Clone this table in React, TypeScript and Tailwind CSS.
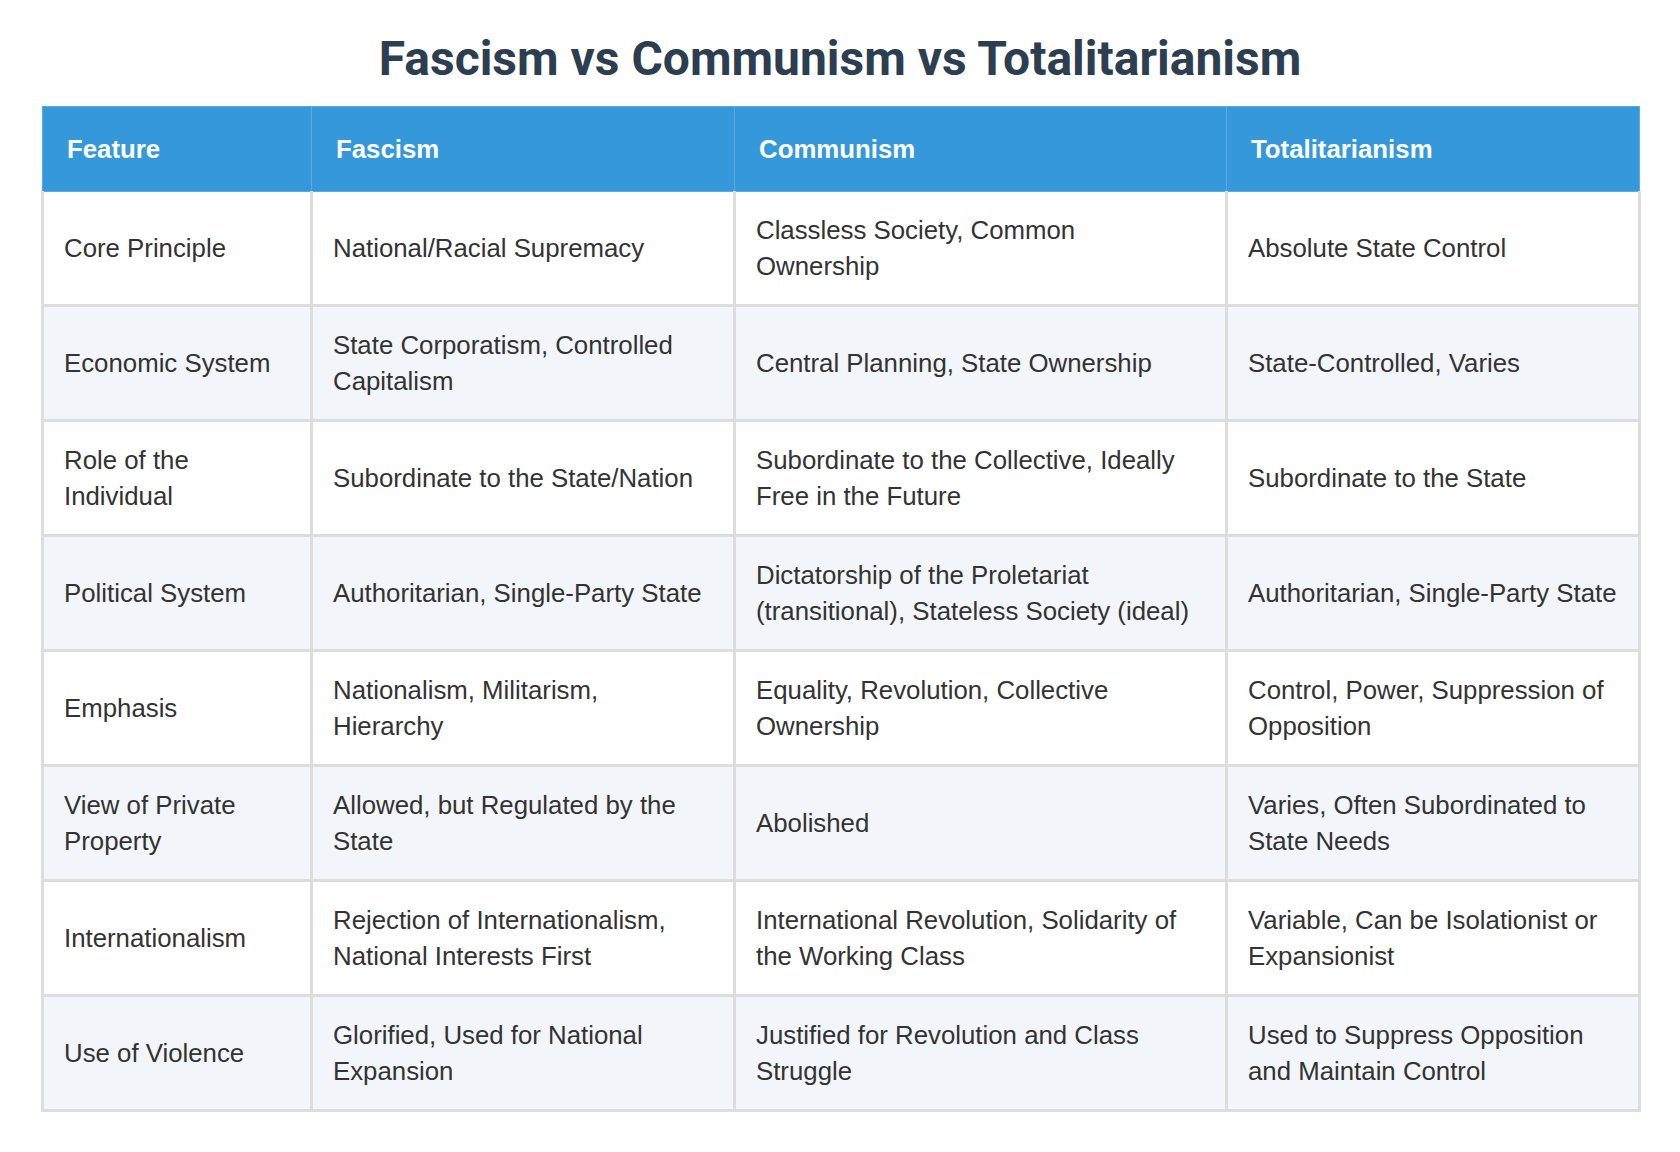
import React from 'react';

const rows: string[][] = [
  ['Core Principle', 'National/Racial Supremacy', 'Classless Society, Common Ownership', 'Absolute State Control'],
  ['Economic System', 'State Corporatism, Controlled Capitalism', 'Central Planning, State Ownership', 'State-Controlled, Varies'],
  ['Role of the Individual', 'Subordinate to the State/Nation', 'Subordinate to the Collective, Ideally Free in the Future', 'Subordinate to the State'],
  ['Political System', 'Authoritarian, Single-Party State', 'Dictatorship of the Proletariat (transitional), Stateless Society (ideal)', 'Authoritarian, Single-Party State'],
  ['Emphasis', 'Nationalism, Militarism, Hierarchy', 'Equality, Revolution, Collective Ownership', 'Control, Power, Suppression of Opposition'],
  ['View of Private Property', 'Allowed, but Regulated by the State', 'Abolished', 'Varies, Often Subordinated to State Needs'],
  ['Internationalism', 'Rejection of Internationalism, National Interests First', 'International Revolution, Solidarity of the Working Class', 'Variable, Can be Isolationist or Expansionist'],
  ['Use of Violence', 'Glorified, Used for National Expansion', 'Justified for Revolution and Class Struggle', 'Used to Suppress Opposition and Maintain Control'],
];

const headers = ['Feature', 'Fascism', 'Communism', 'Totalitarianism'];

const App: React.FC = () => {
  return (
    <div className="min-h-screen bg-white pt-[31px] font-['Liberation_Sans',Arial,sans-serif]">
      <h1 className="text-center text-[48px] leading-[56px] font-bold text-[#2c3e50] font-['Roboto',sans-serif] mb-[19px]">
        Fascism vs Communism vs Totalitarianism
      </h1>

      <table className="ml-[41px] w-[1597px] table-fixed border-collapse text-[25.8px] leading-[36px] text-[#333]">
        <colgroup>
          <col className="w-[269px]" />
          <col className="w-[423px]" />
          <col className="w-[492px]" />
          <col className="w-[413px]" />
        </colgroup>
        <thead>
          <tr className="bg-[#3498db]">
            {headers.map((h, i) => (
              <th
                key={i}
                className="border border-[#5aaae2] py-[24px] px-[24px] text-left font-bold text-white"
              >
                {h}
              </th>
            ))}
          </tr>
        </thead>
        <tbody>
          {rows.map((row, r) => (
            <tr key={r} className={r % 2 === 1 ? 'bg-[#f2f5f9]' : 'bg-white'}>
              {row.map((cell, c) => (
                <td
                  key={c}
                  className={`border-x-[3px] border-b-[3px] border-[#dddddd] px-[20px] py-[20px] align-middle ${r === 0 ? 'border-t' : 'border-t-[3px]'}`}
                >
                  {cell}
                </td>
              ))}
            </tr>
          ))}
        </tbody>
      </table>
    </div>
  );
};

export default App;
